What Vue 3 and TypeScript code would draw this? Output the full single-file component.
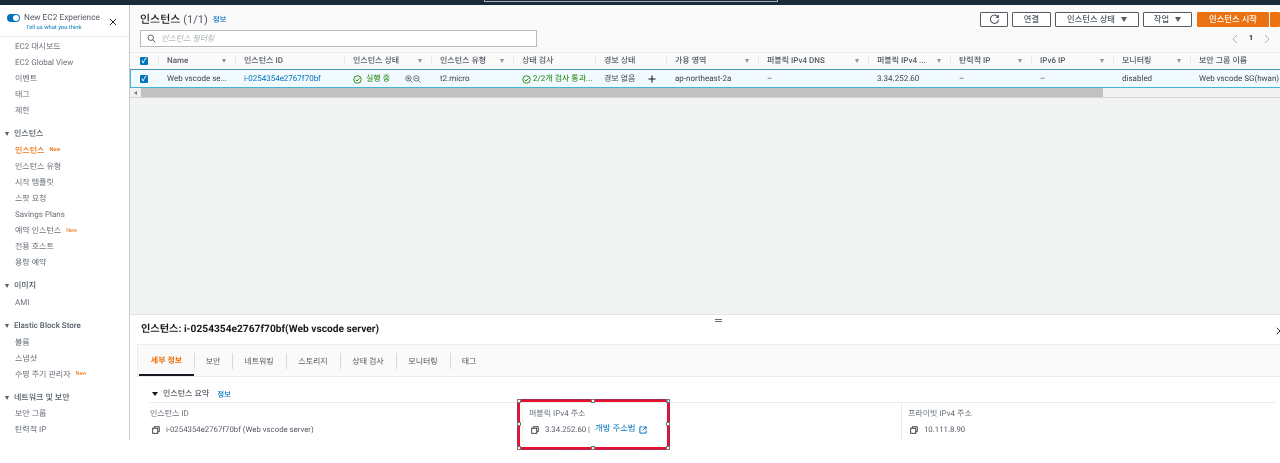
<script setup lang="ts">
interface NavGroup { title?: string; items: { label: string; active?: boolean; isNew?: boolean }[] }
const groups: NavGroup[] = [
  { items: [{ label: 'EC2 대시보드' }, { label: 'EC2 Global View' }, { label: '이벤트' }, { label: '태그' }, { label: '제한' }] },
  { title: '인스턴스', items: [
    { label: '인스턴스', active: true, isNew: true }, { label: '인스턴스 유형' }, { label: '시작 템플릿' }, { label: '스팟 요청' },
    { label: 'Savings Plans' }, { label: '예약 인스턴스', isNew: true }, { label: '전용 호스트' }, { label: '용량 예약' } ] },
  { title: '이미지', items: [{ label: 'AMI' }] },
  { title: 'Elastic Block Store', items: [{ label: '볼륨' }, { label: '스냅샷' }, { label: '수명 주기 관리자', isNew: true }] },
  { title: '네트워크 및 보안', items: [{ label: '보안 그룹' }, { label: '탄력적 IP' }] },
]
const columns = [
  { label: 'Name', sort: true, w: 77 }, { label: '인스턴스 ID', sort: false, w: 109 }, { label: '인스턴스 상태', sort: true, w: 87 },
  { label: '인스턴스 유형', sort: true, w: 82 }, { label: '상태 검사', sort: false, w: 82 }, { label: '경보 상태', sort: false, w: 71 },
  { label: '가용 영역', sort: true, w: 92 }, { label: '퍼블릭 IPv4 DNS', sort: true, w: 110 }, { label: '퍼블릭 IPv4 ...', sort: true, w: 82 },
  { label: '탄력적 IP', sort: true, w: 81 }, { label: 'IPv6 IP', sort: true, w: 82 }, { label: '모니터링', sort: true, w: 77 },
  { label: '보안 그룹 이름', sort: false, w: 90 },
]
const tabs = ['세부 정보', '보안', '네트워킹', '스토리지', '상태 검사', '모니터링', '태그']
const tabWidths = [55, 38, 54, 54, 56, 54, 38]
const handles = ['tl', 'tc', 'tr', 'ml', 'mr', 'bl', 'bc', 'br']
</script>

<template>
  <div class="page">
    <div class="topbar"><div class="topbox"></div></div>
    <div class="body">
      <aside class="side">
        <div class="promo">
          <span class="toggle"><span class="knob"></span></span>
          <div class="promo-text">
            <div class="promo-title">New EC2 Experience</div>
            <div class="promo-sub">Tell us what you think</div>
          </div>
          <svg class="promo-x" viewBox="0 0 10 10"><path d="M1 1l8 8M9 1l-8 8" /></svg>
        </div>
        <div v-for="(g, i) in groups" :key="i" class="group">
          <div v-if="g.title" class="group-title"><span class="caret"></span>{{ g.title }}</div>
          <div v-for="it in g.items" :key="it.label" class="nav" :class="{ active: it.active }">
            {{ it.label }}<span v-if="it.isNew" class="new">New</span>
          </div>
        </div>
      </aside>

      <main class="main">
        <section class="list">
          <div class="head">
            <div class="row-title">
              <h1 class="title">인스턴스 <span class="count">(1/1)</span></h1>
              <a class="info">정보</a>
              <div class="actions">
                <button class="btn refresh">
                  <svg viewBox="0 0 12 12"><path d="M9.9 3.4A4.5 4.5 0 1 0 10.5 6" /><path d="M10.2 1v2.8H7.4" /></svg>
                </button>
                <button class="btn connect">연결</button>
                <button class="btn state">인스턴스 상태<span class="tri"></span></button>
                <button class="btn work">작업<span class="tri"></span></button>
                <button class="btn primary">인스턴스 시작</button>
                <button class="btn primary stub"></button>
              </div>
            </div>
            <div class="row-search">
              <div class="search">
                <svg viewBox="0 0 12 12"><circle cx="5" cy="5" r="3.6" /><path d="M7.7 7.7L11 11" /></svg>
                <span>인스턴스 필터링</span>
              </div>
              <div class="pager">
                <svg viewBox="0 0 6 10"><path d="M5 1L1 5l4 4" /></svg>
                <b>1</b>
                <svg viewBox="0 0 6 10"><path d="M1 1l4 4-4 4" /></svg>
              </div>
            </div>
          </div>

          <div class="thead">
            <div class="cell-check"><span class="check">✓</span></div>
            <div v-for="c in columns" :key="c.label" class="th" :style="{ width: c.w + 'px' }">
              <span>{{ c.label }}</span><i v-if="c.sort" class="sort"></i>
            </div>
          </div>
          <div class="tr">
            <div class="cell-check"><span class="check">✓</span></div>
            <div class="td" style="width: 77px">Web vscode se...</div>
            <div class="td link" style="width: 109px">i-0254354e2767f70bf</div>
            <div class="td green" style="width: 87px">
              <svg class="ok" viewBox="0 0 12 12"><circle cx="6" cy="6" r="5" /><path d="M3.4 6.2l1.9 1.9 3.3-3.6" /></svg>
              <span class="run">실행 중</span>
              <svg class="zoom" viewBox="0 0 9 9"><circle cx="3.8" cy="3.8" r="3" /><path d="M6 6l2.5 2.5M2.3 3.8h3M3.8 2.3v3" /></svg>
              <svg class="zoom" viewBox="0 0 9 9"><circle cx="3.8" cy="3.8" r="3" /><path d="M6 6l2.5 2.5M2.3 3.8h3" /></svg>
            </div>
            <div class="td" style="width: 82px">t2.micro</div>
            <div class="td green check-cell" style="width: 82px">
              <svg class="ok" viewBox="0 0 12 12"><circle cx="6" cy="6" r="5" /><path d="M3.4 6.2l1.9 1.9 3.3-3.6" /></svg>
              <span>2/2개 검사 통과...</span>
            </div>
            <div class="td alarm" style="width: 71px">
              <span>경보 없음</span>
              <svg class="plus" viewBox="0 0 9 9"><path d="M4.5 0.5v8M0.5 4.5h8" /></svg>
            </div>
            <div class="td" style="width: 92px">ap-northeast-2a</div>
            <div class="td" style="width: 110px">–</div>
            <div class="td" style="width: 82px">3.34.252.60</div>
            <div class="td" style="width: 81px">–</div>
            <div class="td" style="width: 82px">–</div>
            <div class="td" style="width: 77px">disabled</div>
            <div class="td" style="width: 90px">Web vscode SG(hwan)</div>
          </div>
          <div class="scroll">
            <span class="arrow"></span>
            <div class="thumb"></div>
          </div>
        </section>

        <section class="detail">
          <div class="grip"></div>
          <div class="detail-head">
            <h2>인스턴스: i-0254354e2767f70bf(Web vscode server)</h2>
            <svg class="detail-x" viewBox="0 0 10 10"><path d="M1 1l8 8M9 1l-8 8" /></svg>
          </div>
          <div class="tabs">
            <div v-for="(t, i) in tabs" :key="t" class="tab" :class="{ on: i === 0 }" :style="{ width: tabWidths[i] + 'px' }">{{ t }}</div>
          </div>
          <div class="summary">
            <div class="summary-head">
              <span class="caret dark"></span><span class="summary-title">인스턴스 요약</span><a class="info small">정보</a>
            </div>
            <div class="fields">
              <div class="field first">
                <div class="label">인스턴스 ID</div>
                <div class="value">
                  <svg class="copy" viewBox="0 0 9 9"><path d="M2.5 2.5V.8h5.7v5.7H6.5" /><rect x=".8" y="2.5" width="5.7" height="5.7" /></svg>
                  i-0254354e2767f70bf (Web vscode server)
                </div>
              </div>
              <div class="field second">
                <div class="label">퍼블릭 IPv4 주소</div>
                <div class="value">
                  <svg class="copy" viewBox="0 0 9 9"><path d="M2.5 2.5V.8h5.7v5.7H6.5" /><rect x=".8" y="2.5" width="5.7" height="5.7" /></svg>
                  3.34.252.60 | <a class="open">개방 주소법</a>
                  <svg class="ext" viewBox="0 0 9 9"><path d="M4 1H1v7h7V5" /><path d="M5 1h3v3M8 1L4 5" /></svg>
                </div>
              </div>
              <div class="field third">
                <div class="label">프라이빗 IPv4 주소</div>
                <div class="value">
                  <svg class="copy" viewBox="0 0 9 9"><path d="M2.5 2.5V.8h5.7v5.7H6.5" /><rect x=".8" y="2.5" width="5.7" height="5.7" /></svg>
                  10.111.8.90
                </div>
              </div>
            </div>
          </div>
        </section>
      </main>
    </div>
    <div class="selection">
      <span v-for="h in handles" :key="h" class="handle" :class="h"></span>
    </div>
  </div>
</template>

<style>
html, body { margin: 0; background: #fff; }
</style>

<style scoped>
* { box-sizing: border-box; }
.page {
  position: relative;
  width: 1280px;
  height: 463px;
  overflow: hidden;
  background: #fff;
  color: #444;
  font: 8px/1.2 Roboto, "Noto Sans CJK KR", sans-serif;
  text-rendering: geometricPrecision;
}
.topbar { height: 5px; background: #1b2a3b; }
.topbox { width: 294px; height: 2px; margin-left: 484px; border: 1px solid #aab2b8; border-top: 0; }
.body { display: flex; height: 435px; filter: blur(0.3px); }

.side { width: 130px; flex: none; border-right: 1px solid #c6c9ca; overflow: hidden; background: #fff; }
.promo { display: flex; align-items: flex-start; height: 32px; margin-bottom: 1.5px; padding: 8px 0 0 7px; border-bottom: 1px solid #eaeded; }
.toggle { width: 13px; height: 8px; margin-top: 1px; border-radius: 4px; background: #0073bb; position: relative; flex: none; }
.knob { position: absolute; right: 1px; top: 1px; width: 6px; height: 6px; border-radius: 50%; background: #fff; }
.promo-text { margin-left: 4px; width: 85px; flex: none; }
.promo-title { font-size: 8.3px; line-height: 10px; color: #545b64; }
.promo-sub { font-size: 5.8px; line-height: 8px; color: #0073bb; margin-left: 2px; margin-top: 1px; }
.promo-x { width: 8px; height: 8px; margin: 5px 0 0 0; flex: none; fill: none; stroke: #16191f; stroke-width: 1.2; }
.group { margin-bottom: 6.5px; }
.group-title { display: flex; align-items: center; height: 17px; font-size: 8px; font-weight: 500; color: #545b64; padding-left: 5px; }
.caret { width: 0; height: 0; margin-right: 5px; border: 2.5px solid transparent; border-top: 4px solid #545b64; border-bottom: 0; }
.nav { display: flex; align-items: center; height: 16.1px; padding-left: 15px; color: #687078; font-size: 8px; white-space: nowrap; }
.nav.active { color: #ec7211; font-weight: 500; }
.new { margin-left: 5px; font-size: 5.5px; color: #ec7211; }

.main { flex: 1; min-width: 0; display: flex; flex-direction: column; background: #f2f3f3; }
.list { flex: 1; min-height: 0; }
.head { height: 47px; padding: 7px 0 0 10px; background: #fafafa; }
.row-title { display: flex; align-items: center; height: 15px; }
.title { margin: 0; font-size: 11px; font-weight: 500; color: #16191f; }
.count { font-weight: 400; color: #545b64; }
.info { color: #0073bb; font-size: 7.5px; font-weight: 500; margin-left: 5px; }
.actions { display: flex; margin-left: auto; gap: 4px; }
.btn {
  height: 15px; padding: 0; border: 1px solid #545b64; border-radius: 1px; background: #fff; color: #545b64;
  font: 500 8.3px/1 Roboto, "Noto Sans CJK KR", sans-serif; display: flex; align-items: center; justify-content: center;
}
.refresh { width: 28px; }
.refresh svg { width: 11px; height: 11px; fill: none; stroke: #545b64; stroke-width: 1.2; }
.connect { width: 39px; }
.state { width: 84px; }
.work { width: 49px; }
.tri { width: 0; height: 0; margin-left: 6px; border: 3px solid transparent; border-top: 5px solid #545b64; border-bottom: 0; }
.primary { width: 72px; margin-left: 1px; background: #ec7211; border-color: #ec7211; color: #fff; }
.stub { width: 10px; margin-left: -3px; }
.row-search { display: flex; align-items: center; height: 17px; margin-top: 3px; }
.search { width: 397px; height: 17px; display: flex; align-items: center; padding-left: 6px; background: #fff; border: 1px solid #b5bcbc; color: #aab7b8; font-size: 8px; font-style: italic; }
.search svg { width: 9px; height: 9px; margin-right: 5px; fill: none; stroke: #545b64; stroke-width: 1.3; }
.pager { display: flex; align-items: center; margin-left: auto; padding-right: 10px; }
.pager svg { width: 6px; height: 10px; fill: none; stroke: #aab7b8; stroke-width: 1; }
.pager b { margin: 0 11px; font-size: 7px; color: #16191f; }

.thead { display: flex; height: 17px; background: #fafafa; border-top: 1px solid #eaeded; color: #545b64; }
.cell-check { width: 28px; flex: none; display: flex; align-items: center; padding-left: 10px; }
.check { width: 8px; height: 8px; border-radius: 1px; background: #0073bb; color: #fff; font-size: 7px; line-height: 8px; text-align: center; font-weight: 700; }
.th { flex: none; display: flex; align-items: center; justify-content: space-between; padding: 0 9px 0 9px; font-size: 8px; font-weight: 500; white-space: nowrap; position: relative; }
.th::before { content: ""; position: absolute; left: 0; top: 4px; bottom: 4px; width: 1px; background: #e4e7e7; }
.sort { width: 0; height: 0; border: 2.5px solid transparent; border-top: 4px solid #879596; border-bottom: 0; }
.tr { display: flex; height: 19px; background: #f1faff; border-top: 1px solid #4a94ad; border-bottom: 1px solid #44b4d4; box-shadow: inset 1px 0 0 #44b4d4; color: #444; }
.td { flex: none; display: flex; align-items: center; padding: 1px 0 0 9px; white-space: nowrap; overflow: hidden; font-size: 8px; }
.link { color: #0073bb; }
.green { color: #1d8102; }
.ok { width: 9px; height: 9px; flex: none; fill: none; stroke: #1d8102; stroke-width: 1.2; }
.run { margin-left: 4px; width: 39px; font-size: 8px; }
.zoom { width: 8px; height: 8px; fill: none; stroke: #545b64; stroke-width: .9; flex: none; }
.check-cell span { margin-left: 2px; font-size: 8px; }
.alarm { gap: 13px; font-size: 8px; }
.plus { width: 8px; height: 8px; stroke: #16191f; stroke-width: 1.2; fill: none; flex: none; }
.scroll { position: relative; display: flex; align-items: center; height: 10px; background: #f1f1f1; border-bottom: 1px solid #d5d5d5; }
.arrow { margin-left: 4px; width: 0; height: 0; border: 2px solid transparent; border-right: 3px solid #777; border-left: 0; }
.thumb { margin-left: 4px; width: 962px; height: 9px; background: #c1c1c1; }

.detail { position: relative; flex: none; height: 126px; background: #fff; border-top: 1px solid #e3e5e5; overflow: hidden; }
.grip { position: absolute; left: 585px; top: 4px; width: 7px; height: 3px; border-top: 1px solid #687078; border-bottom: 1px solid #687078; }
.detail-head { display: flex; align-items: center; justify-content: space-between; height: 29px; padding: 2px 0 0 11px; }
.detail-head h2 { margin: 0; font-size: 10.2px; font-weight: 700; color: #16191f; white-space: nowrap; }
.detail-x { width: 8px; height: 8px; margin-right: -4px; fill: none; stroke: #16191f; stroke-width: 1.2; }
.tabs { display: flex; height: 33px; margin-left: 7px; padding-left: 1px; background: #fafafa; border-top: 1px solid #eaeded; border-bottom: 1px solid #eaeded; border-left: 1px solid #eaeded; }
.tab { flex: none; height: 31px; padding-top: 2px; position: relative; display: flex; align-items: center; justify-content: center; color: #545b64; font-size: 8px; }
.tab + .tab::before { content: ""; position: absolute; left: 0; top: 8px; bottom: 7px; width: 1px; background: #d5dbdb; }
.tab.on { color: #ec7211; font-weight: 600; border-bottom: 2px solid #16191f; }
.summary { margin-left: 20px; padding-top: 9px; }
.summary-head { display: flex; align-items: center; margin-right: 5px; border-bottom: 1px solid #eaeded; height: 17px; padding-left: 2px; }
.caret.dark { border-left-width: 3px; border-right-width: 3px; border-top-color: #16191f; margin-right: 5px; }
.summary-title { font-size: 8px; font-weight: 500; color: #545b64; }
.info.small { margin-left: 8px; font-size: 7.5px; }
.fields { display: flex; height: 38px; }
.field { padding-top: 5px; white-space: nowrap; }
.first { width: 372px; }
.second { width: 379px; padding-left: 6px; border-left: 1px solid #f1f3f3; }
.third { padding-left: 6px; border-left: 1px solid #eaeded; }
.label { color: #687078; font-size: 8px; line-height: 11px; }
.value { display: flex; align-items: center; margin-top: 5px; padding-left: 2px; height: 11px; color: #545b64; font-size: 7.8px; white-space: pre; }
.copy { width: 8px; height: 8px; margin-right: 4px; flex: none; fill: #fff; stroke: #16191f; stroke-width: .9; }
.open { color: #0073bb; margin-left: 3px; font-size: 8.4px; }
.ext { width: 8px; height: 8px; margin-left: 3px; fill: none; stroke: #0073bb; stroke-width: 1.1; }

.selection { position: absolute; left: 517px; top: 399px; width: 153px; height: 51px; border: 3px solid #e8112d; outline: 1px dashed #7a3a7a; outline-offset: -1px; }
.handle { position: absolute; width: 4px; height: 4px; background: #fff; border: 1px solid #777; }
.tl { left: -3px; top: -3px; } .tc { left: 71px; top: -3px; } .tr { right: -3px; top: -3px; }
.ml { left: -3px; top: 20px; } .mr { right: -3px; top: 20px; }
.bl { left: -3px; bottom: -3px; } .bc { left: 71px; bottom: -3px; } .br { right: -3px; bottom: -3px; }
</style>
